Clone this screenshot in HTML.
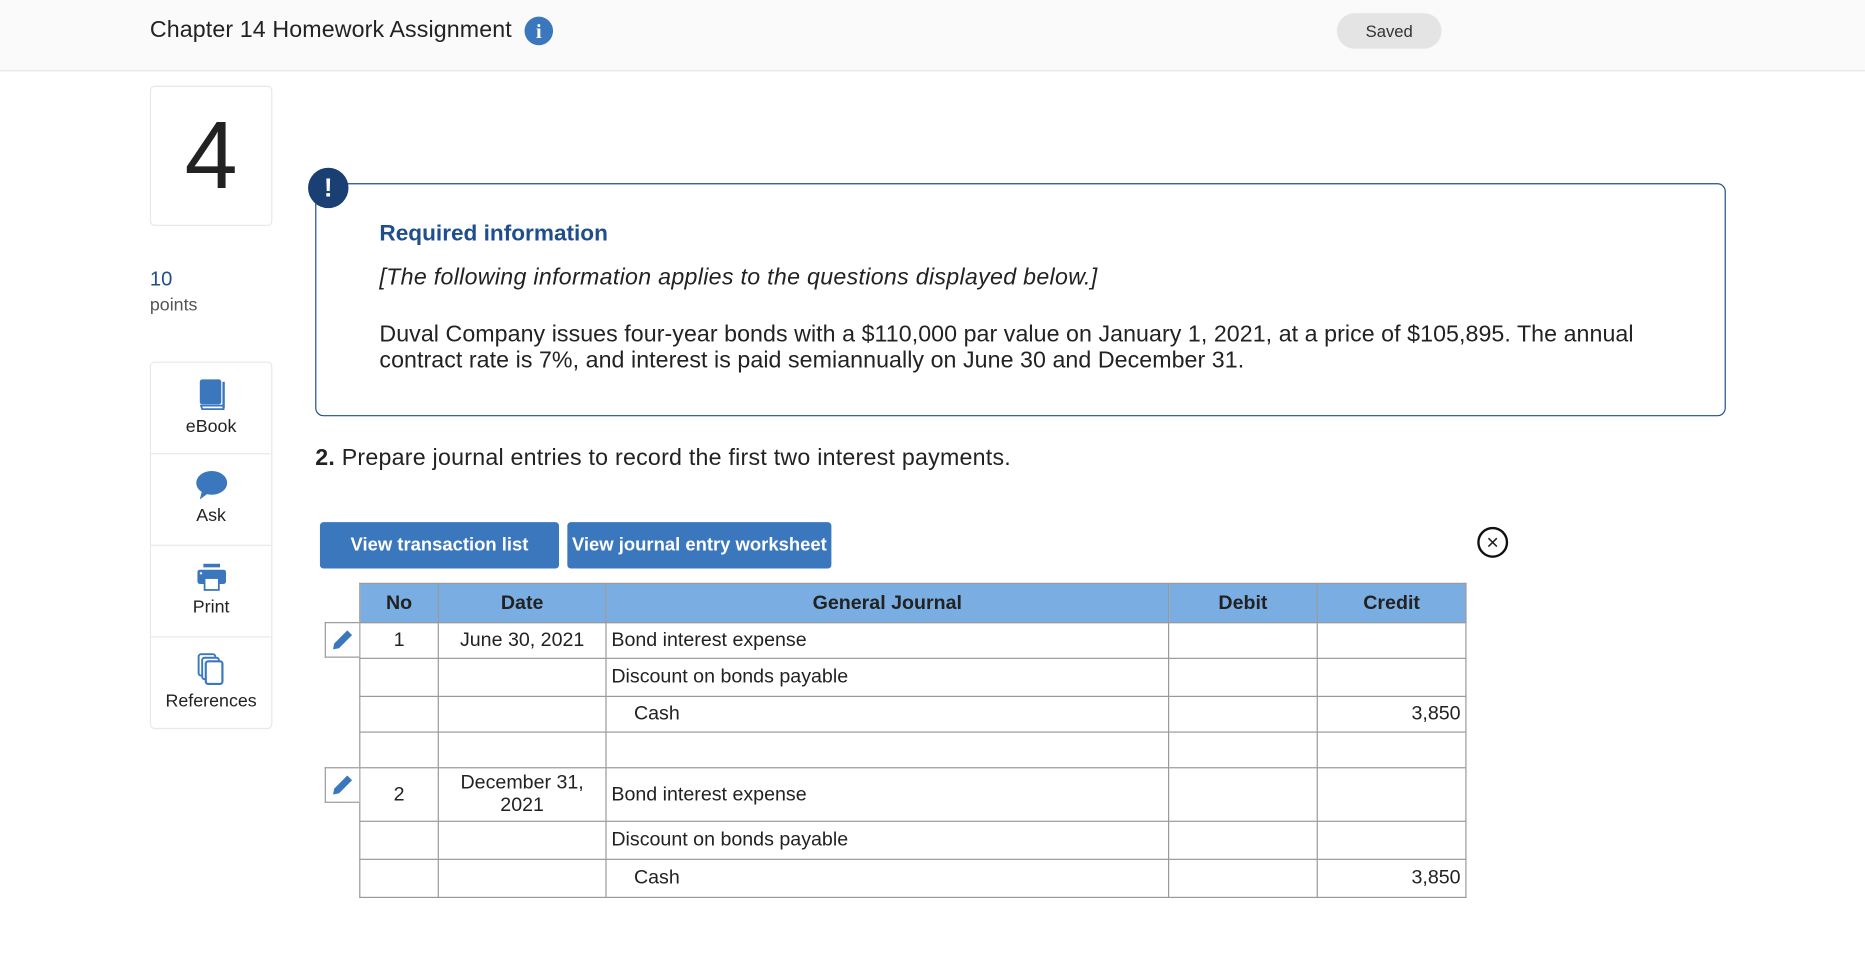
<!DOCTYPE html>
<html><head><meta charset="utf-8"><style>
html,body{margin:0;padding:0;width:1865px;height:960px;overflow:hidden;background:#fff}
#w{position:absolute;left:0;top:0;width:1568px;height:807px;transform:scale(1.1894);transform-origin:0 0;font-family:"Liberation Sans",sans-serif;color:#222}
.a{position:absolute}
.hdr{left:0;top:0;width:1568px;height:59px;background:#fafafa;border-bottom:1px solid #e6e6e6}
.cell{position:absolute;left:0;width:101px;height:76px;border-bottom:1px solid #e8e8e8;text-align:center;font-size:15px;color:#222}
.cell svg{display:block;margin:12px auto 3px}
table{border-collapse:collapse;font-size:16.5px}
td,th{border:1px solid #999;padding:0 4px}
th{background:#7aaee3;font-weight:bold;height:32px}
.btn{background:#3a77bd;color:#fff;font-weight:bold;font-size:15.5px;text-align:center;line-height:39px;border-radius:3px;height:39px}
.pen{position:absolute;left:273px;width:28px;height:28px;border:1px solid #999;border-right:none;background:#fff}
</style></head><body><div id="w">
<div class="a hdr"></div>
<div class="a" style="left:126px;top:14px;font-size:19.5px;letter-spacing:0.1px">Chapter 14 Homework Assignment</div>
<div class="a" style="left:441px;top:14px;width:24px;height:24px;border-radius:50%;background:#3a77bd;color:#fff;font:bold 17px 'Liberation Serif',serif;text-align:center;line-height:25px">i</div>
<div class="a" style="left:1124px;top:11px;width:88px;height:30px;border-radius:15px;background:#e4e4e4;font-size:14px;text-align:center;line-height:30px;color:#333">Saved</div>

<div class="a" style="left:126px;top:72px;width:101px;height:116px;border:1px solid #e8e8e8;border-radius:4px;text-align:center;font-size:80px;line-height:116px;color:#222">4</div>
<div class="a" style="left:126px;top:225px;font-size:17px;color:#1f4e8c">10</div>
<div class="a" style="left:126px;top:248px;font-size:15px;color:#555">points</div>

<div class="a" style="left:126px;top:304px;width:101px;height:307px;border:1px solid #e8e8e8;border-radius:4px;overflow:hidden">
 <div class="cell" style="top:0"><svg width="24" height="30" viewBox="0 0 24 30"><rect x="2" y="2" width="18" height="21" rx="2" fill="#3a77bd"/><path d="M3 24h19v3H4z" fill="none" stroke="#3a77bd" stroke-width="1.5"/><rect x="21" y="4" width="2" height="22" fill="#3a77bd"/></svg>eBook</div>
 <div class="cell" style="top:77px"><svg width="28" height="28" viewBox="0 0 28 28"><ellipse cx="14" cy="12" rx="13" ry="10" fill="#3a77bd"/><path d="M6 18 L4 26 L12 20z" fill="#3a77bd"/></svg>Ask</div>
 <div class="cell" style="top:154px"><svg width="28" height="28" viewBox="0 0 28 28"><rect x="7" y="3" width="14" height="3" fill="#3a77bd"/><rect x="2" y="8" width="24" height="12" rx="2" fill="#3a77bd"/><circle cx="5" cy="11" r="1" fill="#fff"/><rect x="8" y="15" width="12" height="10" fill="#fff" stroke="#3a77bd" stroke-width="1.5"/></svg>Print</div>
 <div class="cell" style="top:231px;border:none"><svg width="28" height="30" viewBox="0 0 28 30"><rect x="3" y="2" width="14" height="18" rx="2" fill="#fff" stroke="#3a77bd" stroke-width="1.6"/><rect x="6" y="5" width="14" height="18" rx="2" fill="#fff" stroke="#3a77bd" stroke-width="1.6"/><rect x="9" y="8" width="14" height="19" rx="2" fill="#fff" stroke="#3a77bd" stroke-width="1.8"/></svg>References</div>
</div>

<div class="a" style="left:265px;top:154px;width:1184px;height:194px;border:1px solid #1f4e8c;border-radius:7px"></div>
<div class="a" style="left:259px;top:141px;width:34px;height:34px;border-radius:50%;background:#1a3f73;color:#fff;font-weight:bold;font-size:22px;text-align:center;line-height:34px">!</div>
<div class="a" style="left:319px;top:186px;font-size:19px;font-weight:bold;color:#1f4e8c">Required information</div>
<div class="a" style="left:319px;top:222px;font-size:19.5px;font-style:italic;color:#222;letter-spacing:0.25px">[The following information applies to the questions displayed below.]</div>
<div class="a" style="left:319px;top:270px;width:1100px;font-size:19.5px;line-height:22px;color:#222;letter-spacing:0.05px">Duval Company issues four-year bonds with a $110,000 par value on January 1, 2021, at a price of $105,895. The annual contract rate is 7%, and interest is paid semiannually on June 30 and December 31.</div>
<div class="a" style="left:265px;top:374px;font-size:19.5px;letter-spacing:0.2px"><b>2.</b> Prepare journal entries to record the first two interest payments.</div>

<div class="a btn" style="left:269px;top:439px;width:201px">View transaction list</div>
<div class="a btn" style="left:477px;top:439px;width:222px">View journal entry worksheet</div>
<div class="a" style="left:1242px;top:443px;width:22px;height:22px;border:2px solid #111;border-radius:50%;text-align:center;line-height:22px;font-size:18px">×</div>

<table class="a" style="left:302px;top:490px;width:931px">
<tr><th style="width:57px">No</th><th style="width:132px">Date</th><th>General Journal</th><th style="width:116px">Debit</th><th style="width:116px">Credit</th></tr>
<tr><td align="center" style="height:29px">1</td><td align="center">June 30, 2021</td><td>Bond interest expense</td><td></td><td></td></tr>
<tr><td style="height:31px"></td><td></td><td>Discount on bonds payable</td><td></td><td></td></tr>
<tr><td style="height:29px"></td><td></td><td style="padding-left:23px">Cash</td><td></td><td align="right">3,850</td></tr>
<tr><td style="height:29px"></td><td></td><td></td><td></td><td></td></tr>
<tr><td align="center" style="height:44px">2</td><td align="center" style="line-height:19px">December 31,<br>2021</td><td>Bond interest expense</td><td></td><td></td></tr>
<tr><td style="height:31px"></td><td></td><td>Discount on bonds payable</td><td></td><td></td></tr>
<tr><td style="height:31px"></td><td></td><td style="padding-left:23px">Cash</td><td></td><td align="right">3,850</td></tr>
</table>
<div class="pen" style="top:523px"><svg width="28" height="28" viewBox="0 0 28 28"><path d="M6 22l1-5 11-11 4 4-11 11z" fill="#3a77bd"/></svg></div>
<div class="pen" style="top:645px"><svg width="28" height="28" viewBox="0 0 28 28"><path d="M6 22l1-5 11-11 4 4-11 11z" fill="#3a77bd"/></svg></div>
</div></body></html>
